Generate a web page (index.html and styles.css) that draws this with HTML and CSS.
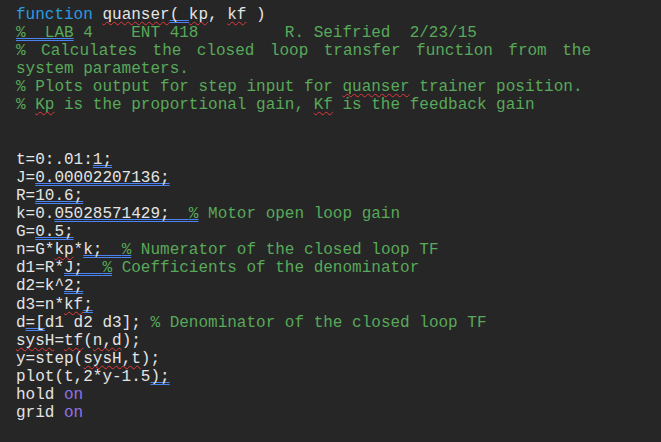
FILE: index.html
```html
<!DOCTYPE html>
<html>
<head>
<meta charset="utf-8">
<link rel="stylesheet" href="styles.css">
</head>
<body>
<div class="doc">
  <div class="ln"><span class="kw">function</span> <span class="sp">quanser</span><span class="gr">( </span><span class="sp">kp</span>, <span class="sp">kf</span> )</div>
  <div class="ln c pre"><span class="gr">%  LAB</span> 4    ENT 418         R. Seifried  2/23/15</div>
  <p class="para c">% Calculates the closed loop transfer function from the system parameters.</p>
  <div class="ln c">% Plots output for step input for <span class="sp">quanser</span> trainer position.</div>
  <div class="ln c">% <span class="sp">Kp</span> is the proportional gain, <span class="sp">Kf</span> is the feedback gain</div>
  <div class="ln">&nbsp;</div>
  <div class="ln">&nbsp;</div>
  <div class="ln pre">t=0:.01:<span class="gr">1;</span></div>
  <div class="ln pre">J=<span class="gr">0.00002207136;</span></div>
  <div class="ln pre">R=<span class="gr">10.6;</span></div>
  <div class="ln pre">k=0.<span class="gr">05028571429;  <span class="c">%</span></span><span class="c"> Motor open loop gain</span></div>
  <div class="ln pre">G=<span class="gr">0.5;</span></div>
  <div class="ln pre">n=G*<span class="sp">kp</span>*<span class="gr">k;  <span class="c">%</span></span><span class="c"> Numerator of the closed loop TF</span></div>
  <div class="ln pre">d1=R*<span class="gr">J;  <span class="c">%</span></span><span class="c"> Coefficients of the denominator</span></div>
  <div class="ln pre">d2=k^<span class="gr">2;</span></div>
  <div class="ln pre">d3=n*<span class="sp">kf</span><span class="gr">;</span></div>
  <div class="ln pre">d<span class="gr">=[</span>d1 d2 d3]; <span class="c">% Denominator of the closed loop TF</span></div>
  <div class="ln pre"><span class="sp">sysH</span>=<span class="sp">tf</span>(<span class="sp">n,d</span>);</div>
  <div class="ln pre">y=step(<span class="sp">sysH,t</span>);</div>
  <div class="ln pre">plot(t,2*y-1.5<span class="gr">);</span></div>
  <div class="ln pre">hold <span class="on">on</span></div>
  <div class="ln pre">grid <span class="on">on</span></div>
</div>
</body>
</html>
```

FILE: styles.css
```css
html, body {
  margin: 0;
  padding: 0;
  background: #262626;
}
.doc {
  width: 575px;
  padding: 6px 0 0 16px;
  font-family: "Liberation Mono", "Courier New", monospace;
  font-size: 16px;
  line-height: 18.1px;
  color: #e4e4e4;
}
.ln {
  height: 18.1px;
  white-space: nowrap;
}
.pre {
  white-space: pre;
}
.para {
  margin: 0;
  text-align: justify;
}
.c {
  color: #58a95a;
}
.kw {
  color: #2b9be0;
}
.on {
  color: #8f72e8;
}
.sp {
  text-decoration: underline wavy #e5393b;
  text-decoration-thickness: 1px;
  text-underline-offset: 2px;
  text-decoration-skip-ink: none;
}
.gr {
  text-decoration: underline double #4b83f2;
  text-decoration-thickness: 1px;
  text-underline-offset: 1px;
  text-decoration-skip-ink: none;
}
```
